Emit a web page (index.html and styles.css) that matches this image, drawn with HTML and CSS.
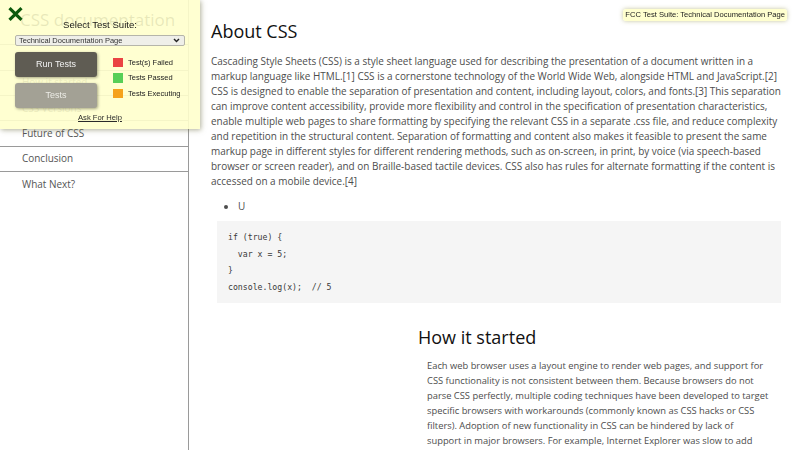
FILE: index.html
```html
<!DOCTYPE html>
<html lang="en">
<head>
<meta charset="utf-8">
<title>CSS documentation</title>
<link rel="stylesheet" href="styles.css">
</head>
<body>
<div class="page">
  <nav class="navbar" id="navbar">
    <header class="nav-header">CSS documentation</header>
    <a class="nav-link" href="#About_CSS">About CSS</a>
    <a class="nav-link" href="#How_it_started">How it started</a>
    <a class="nav-link" href="#CSS_Versions">CSS Versions</a>
    <a class="nav-link" href="#Future_of_CSS">Future of CSS</a>
    <a class="nav-link" href="#Conclusion">Conclusion</a>
    <a class="nav-link" href="#What_Next">What Next?</a>
  </nav>

  <main class="main-doc" id="main-doc">
    <section class="main-section" id="About_CSS">
      <header class="section-title">About CSS</header>
      <p class="section-text">Cascading Style Sheets (CSS) is a style sheet language used for describing the presentation of a document written in a markup language like HTML.[1] CSS is a cornerstone technology of the World Wide Web, alongside HTML and JavaScript.[2] CSS is designed to enable the separation of presentation and content, including layout, colors, and fonts.[3] This separation can improve content accessibility, provide more flexibility and control in the specification of presentation characteristics, enable multiple web pages to share formatting by specifying the relevant CSS in a separate .css file, and reduce complexity and repetition in the structural content. Separation of formatting and content also makes it feasible to present the same markup page in different styles for different rendering methods, such as on-screen, in print, by voice (via speech-based browser or screen reader), and on Braille-based tactile devices. CSS also has rules for alternate formatting if the content is accessed on a mobile device.[4]</p>
      <ul class="section-list">
        <li>U</li>
      </ul>
      <pre class="code-block"><code>if (true) {
  var x = 5;
}
console.log(x);  // 5</code></pre>
    </section>

    <section class="main-section main-section-indented" id="How_it_started">
      <header class="section-title">How it started</header>
      <p class="section-text section-text-indented">Each web browser uses a layout engine to render web pages, and support for CSS functionality is not consistent between them. Because browsers do not parse CSS perfectly, multiple coding techniques have been developed to target specific browsers with workarounds (commonly known as CSS hacks or CSS filters). Adoption of new functionality in CSS can be hindered by lack of support in major browsers. For example, Internet Explorer was slow to add support for many CSS 3 features, which slowed adoption of those features and damaged the browser's reputation among developers.</p>
    </section>
  </main>
</div>

<div class="fcc-panel">
  <button class="fcc-toggle" aria-label="Close">
    <svg width="15" height="14" viewBox="0 0 15 14"><path d="M1.5 1.2 L13.5 12.8 M13.5 1.2 L1.5 12.8" stroke="#0c5a0c" stroke-width="3.2" fill="none"/></svg>
  </button>
  <div class="fcc-title">Select Test Suite:</div>
  <div class="fcc-select">
    <span>Technical Documentation Page</span>
    <svg width="7" height="5" viewBox="0 0 7 5"><path d="M1 1 L3.5 3.6 L6 1" stroke="#222" stroke-width="1.4" fill="none"/></svg>
  </div>
  <div class="fcc-body">
    <div class="fcc-buttons">
      <button class="fcc-btn fcc-btn-run">Run Tests</button>
      <button class="fcc-btn fcc-btn-tests">Tests</button>
    </div>
    <ul class="fcc-legend">
      <li class="fcc-legend-item"><span class="fcc-swatch swatch-fail"></span>Test(s) Failed</li>
      <li class="fcc-legend-item"><span class="fcc-swatch swatch-pass"></span>Tests Passed</li>
      <li class="fcc-legend-item"><span class="fcc-swatch swatch-exec"></span>Tests Executing</li>
    </ul>
  </div>
  <a class="fcc-help" href="#">Ask For Help</a>
</div>

<div class="fcc-indicator">FCC Test Suite: Technical Documentation Page</div>
</body>
</html>
```

FILE: styles.css
```css
* {
  box-sizing: border-box;
}

html, body {
  margin: 0;
  padding: 0;
  height: 450px;
  overflow: hidden;
  background: #ffffff;
}

body {
  font-family: "Open Sans", "Noto Sans", sans-serif;
  font-size: 9.96px;
  color: #4d4d4d;
}

.page {
  display: flex;
  align-items: flex-start;
}

/* ---------- navbar ---------- */
.navbar {
  flex: 0 0 189px;
  height: 450px;
  border-right: 1px solid #9a9a9a;
  display: flex;
  flex-direction: column;
}

.nav-header {
  height: 44.4px;
  padding: 8px 0 0 20px;
  font-size: 17px;
  line-height: 23px;
  color: #111;
}

.nav-link {
  display: flex;
  align-items: center;
  height: 25.33px;
  padding-left: 22px;
  border-top: 1px solid #9a9a9a;
  color: #555;
  text-decoration: none;
  line-height: 15px;
}

/* ---------- main ---------- */
.main-doc {
  flex: 1;
  padding: 19px 15px 0 22px;
}

.section-title {
  font-size: 18px;
  line-height: 24.5px;
  color: #111;
}

.section-text {
  margin: 10.5px 0 0;
  line-height: 15px;
}

.section-list {
  margin: 10px 0 0;
  padding-left: 27px;
  line-height: 15px;
}

.code-block {
  margin: 7px 4px 0 6px;
  padding: 8px 11px;
  background: #f5f5f5;
  font-family: "DejaVu Sans Mono", "Liberation Mono", monospace;
  font-size: 8.2px;
  line-height: 16.5px;
  color: #3a3a3a;
  white-space: pre;
}

.code-block code {
  font-family: inherit;
}

.main-section-indented {
  margin: 21.5px 0 0 207px;
}

.section-text-indented {
  margin-top: 8.5px;
  padding: 0 15.8px 0 9px;
  font-size: 9.35px;
}

/* ---------- FCC test panel ---------- */
.fcc-panel {
  position: fixed;
  top: 0;
  left: 0;
  width: 200px;
  height: 129px;
  background: rgba(255, 255, 204, 0.9);
  box-shadow: 1px 1px 5px rgba(110, 110, 70, 0.55);
  font-family: "Liberation Sans", Arial, sans-serif;
  color: #222;
}

.fcc-toggle {
  position: absolute;
  left: 8px;
  top: 7px;
  width: 15px;
  height: 14px;
  padding: 0;
  border: 0;
  background: none;
  display: block;
}

.fcc-toggle svg {
  display: block;
}

.fcc-title {
  margin-top: 18.5px;
  text-align: center;
  font-size: 9.6px;
  line-height: 11px;
  color: #1a1a1a;
}

.fcc-select {
  margin: 5px 15px 0;
  height: 11px;
  display: flex;
  align-items: center;
  justify-content: space-between;
  padding: 0 4px 0 3px;
  background: #efefe9;
  border: 1px solid #b5b5aa;
  border-radius: 2px;
  font-size: 7.5px;
  color: #333;
}

.fcc-select svg {
  display: block;
}

.fcc-body {
  display: flex;
  margin: 6px 0 0 15px;
}

.fcc-buttons {
  display: flex;
  flex-direction: column;
  gap: 6px;
  width: 82px;
}

.fcc-btn {
  height: 25px;
  border: 0;
  border-radius: 3px;
  font-family: "Liberation Sans", Arial, sans-serif;
  font-size: 9px;
  color: #f2f2f2;
  box-shadow: 1px 1px 3px rgba(60, 60, 40, 0.45);
  padding: 0;
}

.fcc-btn-run {
  background: #5f5c53;
}

.fcc-btn-tests {
  background: #a3a195;
  color: #ecece6;
}

.fcc-legend {
  list-style: none;
  margin: 6px 0 0 16px;
  padding: 0;
  display: flex;
  flex-direction: column;
  gap: 6px;
}

.fcc-legend-item {
  display: flex;
  align-items: center;
  gap: 5.5px;
  height: 9.5px;
  font-size: 7.5px;
  color: #222;
}

.fcc-swatch {
  width: 9.5px;
  height: 9.5px;
  display: block;
}

.swatch-fail { background: #ea4343; }
.swatch-pass { background: #57cf57; }
.swatch-exec { background: #f5a21c; }

.fcc-help {
  display: block;
  margin-top: 5px;
  text-align: center;
  font-size: 7.6px;
  line-height: 9px;
  color: #2a2a2a;
  text-decoration: underline;
}

/* ---------- FCC indicator ---------- */
.fcc-indicator {
  position: fixed;
  top: 9px;
  right: 13px;
  padding: 1px 2px;
  background: rgba(255, 255, 204, 0.95);
  border-radius: 3px;
  box-shadow: 0 0 4px rgba(140, 140, 60, 0.5);
  font-family: "Liberation Sans", Arial, sans-serif;
  font-size: 7.6px;
  line-height: 10px;
  color: #222;
}
```
